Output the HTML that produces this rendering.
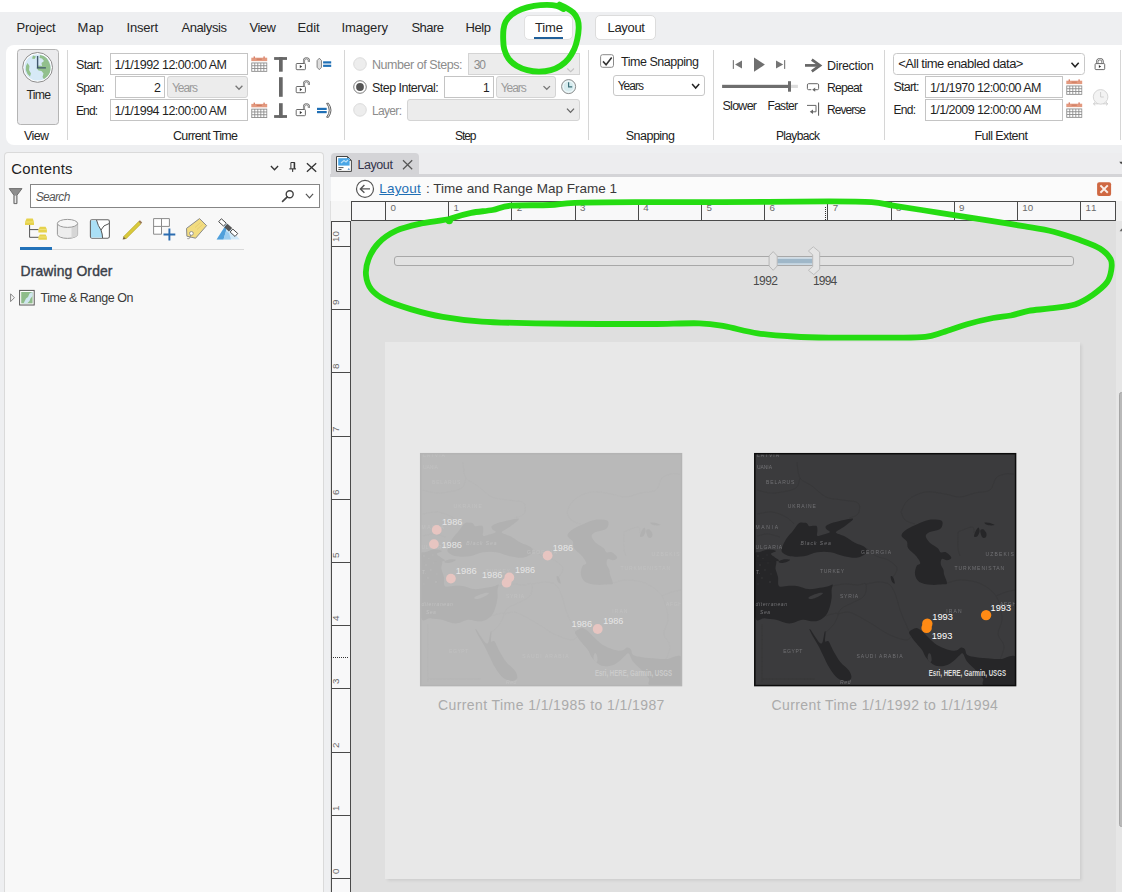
<!DOCTYPE html>
<html><head><meta charset="utf-8"><title>ArcGIS Pro - Time</title>
<style>
html,body{margin:0;padding:0;}
body{width:1122px;height:892px;overflow:hidden;position:relative;background:#eeeff1;font-family:"Liberation Sans",sans-serif;}
.t{position:absolute;white-space:pre;}
.b{position:absolute;box-sizing:border-box;}
svg{position:absolute;overflow:visible;}
</style></head><body>
<div class="b" style="left:0.0px;top:0.0px;width:1122.0px;height:12.0px;background:#ffffff;border-radius:0px;"></div>
<div class="b" style="left:0.0px;top:12.0px;width:1122.0px;height:33.0px;background:#eeeff1;border-radius:0px;"></div>
<div class="b" style="left:6.0px;top:45.0px;width:1116.0px;height:100.0px;background:#ffffff;border-radius:0px;border-radius:8px 0 0 8px;"></div>
<div class="b" style="left:0.0px;top:145.0px;width:1122.0px;height:8.0px;background:#eeeff1;border-radius:0px;"></div>
<div class="t" style="left:16.5px;top:18.0px;font-size:13px;line-height:19px;letter-spacing:-0.24px;color:#262626;">Project</div>
<div class="t" style="left:77.5px;top:18.0px;font-size:13px;line-height:19px;letter-spacing:0.36px;color:#262626;">Map</div>
<div class="t" style="left:126.5px;top:18.0px;font-size:13px;line-height:19px;letter-spacing:-0.20px;color:#262626;">Insert</div>
<div class="t" style="left:181.5px;top:18.0px;font-size:13px;line-height:19px;letter-spacing:-0.42px;color:#262626;">Analysis</div>
<div class="t" style="left:249.5px;top:18.0px;font-size:13px;line-height:19px;letter-spacing:-0.48px;color:#262626;">View</div>
<div class="t" style="left:297.5px;top:18.0px;font-size:13px;line-height:19px;letter-spacing:-0.13px;color:#262626;">Edit</div>
<div class="t" style="left:341.5px;top:18.0px;font-size:13px;line-height:19px;letter-spacing:-0.08px;color:#262626;">Imagery</div>
<div class="t" style="left:411.5px;top:18.0px;font-size:13px;line-height:19px;letter-spacing:-0.55px;color:#262626;">Share</div>
<div class="t" style="left:465.5px;top:18.0px;font-size:13px;line-height:19px;letter-spacing:-0.41px;color:#262626;">Help</div>
<div class="b" style="left:524.0px;top:15.0px;width:49.0px;height:25.0px;background:#ffffff;border:1px solid #e0e0e0;border-radius:5px;"></div>
<div class="t" style="left:535.0px;top:18.0px;font-size:13px;line-height:19px;letter-spacing:-0.14px;color:#262626;">Time</div>
<div class="b" style="left:534.0px;top:37.0px;width:29.0px;height:2.0px;background:#1f5f99;border-radius:0px;"></div>
<div class="b" style="left:595.0px;top:15.0px;width:61.0px;height:25.0px;background:#ffffff;border:1px solid #dcdcdc;border-radius:5px;"></div>
<div class="t" style="left:607.5px;top:18.0px;font-size:13px;line-height:19px;letter-spacing:-0.31px;color:#262626;">Layout</div>
<div class="b" style="left:17.0px;top:49.0px;width:42.0px;height:76.0px;background:#ebebed;border:1px solid #b4b4b4;border-radius:3.5px;"></div>
<div class="t" style="left:26.4px;top:85.7px;font-size:12.25px;line-height:18px;letter-spacing:-0.66px;color:#262626;">Time</div>
<div class="t" style="left:24.0px;top:127.0px;font-size:12.5px;line-height:18px;letter-spacing:-0.62px;color:#222;">View</div>
<div class="b" style="left:67.0px;top:50.0px;width:1.0px;height:90.0px;background:#d6d6d6;border-radius:0px;"></div>
<div class="b" style="left:344.0px;top:50.0px;width:1.0px;height:90.0px;background:#d6d6d6;border-radius:0px;"></div>
<div class="b" style="left:588.0px;top:50.0px;width:1.0px;height:90.0px;background:#d6d6d6;border-radius:0px;"></div>
<div class="b" style="left:713.0px;top:50.0px;width:1.0px;height:90.0px;background:#d6d6d6;border-radius:0px;"></div>
<div class="b" style="left:884.0px;top:50.0px;width:1.0px;height:90.0px;background:#d6d6d6;border-radius:0px;"></div>
<div class="b" style="left:1120.0px;top:50.0px;width:1.0px;height:90.0px;background:#d6d6d6;border-radius:0px;"></div>
<div class="t" style="left:76.0px;top:56.0px;font-size:12.5px;line-height:18px;letter-spacing:-0.67px;color:#1f1f1f;">Start:</div>
<div class="t" style="left:76.0px;top:79.0px;font-size:12.0px;line-height:18px;letter-spacing:-0.71px;color:#1f1f1f;">Span:</div>
<div class="t" style="left:76.0px;top:102.0px;font-size:12.0px;line-height:18px;letter-spacing:-0.89px;color:#1f1f1f;">End:</div>
<div class="b" style="left:110.0px;top:53.0px;width:138.0px;height:22.0px;background:#fff;border:1px solid #c4c4c4;border-radius:0px;"></div>
<div class="t" style="left:114.5px;top:56.0px;font-size:12.5px;line-height:18px;letter-spacing:-0.52px;color:#1f1f1f;">1/1/1992 12:00:00 AM</div>
<div class="b" style="left:115.0px;top:76.0px;width:50.0px;height:22.0px;background:#fff;border:1px solid #c4c4c4;border-radius:0px;"></div>
<div class="t" style="left:154.0px;top:79.0px;font-size:12.5px;line-height:18px;letter-spacing:-0.45px;color:#1f1f1f;">2</div>
<div class="b" style="left:167.0px;top:76.0px;width:81.0px;height:22.0px;background:#ececec;border:1px solid #d4d4d4;border-radius:3px;"></div>
<div class="t" style="left:172.0px;top:79.0px;font-size:12.0px;line-height:18px;letter-spacing:-1.06px;color:#9a9a9a;">Years</div>
<div class="b" style="left:110.0px;top:99.0px;width:138.0px;height:22.0px;background:#fff;border:1px solid #c4c4c4;border-radius:0px;"></div>
<div class="t" style="left:114.5px;top:102.0px;font-size:12.5px;line-height:18px;letter-spacing:-0.52px;color:#1f1f1f;">1/1/1994 12:00:00 AM</div>
<div class="t" style="left:173.0px;top:127.0px;font-size:12.5px;line-height:18px;letter-spacing:-0.66px;color:#222;">Current Time</div>
<div class="t" style="left:372.0px;top:55.7px;font-size:12.5px;line-height:18px;letter-spacing:-0.45px;color:#8c8c8c;">Number of Steps:</div>
<div class="b" style="left:468.0px;top:53.0px;width:112.0px;height:22.0px;background:#ececec;border:1px solid #d4d4d4;border-radius:0px;"></div>
<div class="t" style="left:473.7px;top:55.7px;font-size:12.0px;line-height:18px;letter-spacing:-1.05px;color:#8c8c8c;">30</div>
<div class="t" style="left:372.0px;top:78.7px;font-size:12.5px;line-height:18px;letter-spacing:-0.53px;color:#1f1f1f;">Step Interval:</div>
<div class="b" style="left:444.0px;top:76.0px;width:50.0px;height:22.0px;background:#fff;border:1px solid #c4c4c4;border-radius:0px;"></div>
<div class="t" style="left:483.0px;top:78.7px;font-size:12.0px;line-height:18px;letter-spacing:-0.67px;color:#1f1f1f;">1</div>
<div class="b" style="left:496.0px;top:76.0px;width:60.0px;height:22.0px;background:#ececec;border:1px solid #d4d4d4;border-radius:3px;"></div>
<div class="t" style="left:500.7px;top:78.7px;font-size:12.0px;line-height:18px;letter-spacing:-1.06px;color:#9a9a9a;">Years</div>
<div class="t" style="left:372.0px;top:102.0px;font-size:12.0px;line-height:18px;letter-spacing:-0.67px;color:#8c8c8c;">Layer:</div>
<div class="b" style="left:407.0px;top:99.0px;width:173.0px;height:22.0px;background:#ececec;border:1px solid #d4d4d4;border-radius:3px;"></div>
<div class="t" style="left:455.0px;top:127.0px;font-size:12.0px;line-height:18px;letter-spacing:-1.06px;color:#222;">Step</div>
<div class="t" style="left:621.0px;top:53.0px;font-size:12.5px;line-height:18px;letter-spacing:-0.47px;color:#1f1f1f;">Time Snapping</div>
<div class="b" style="left:613.0px;top:75.0px;width:92.0px;height:21.0px;background:#fff;border:1px solid #c8c8c8;border-radius:3px;"></div>
<div class="t" style="left:617.7px;top:77.0px;font-size:12.0px;line-height:18px;letter-spacing:-0.99px;color:#1f1f1f;">Years</div>
<div class="t" style="left:625.7px;top:127.0px;font-size:12.5px;line-height:18px;letter-spacing:-0.50px;color:#222;">Snapping</div>
<div class="t" style="left:827.0px;top:57.0px;font-size:12.5px;line-height:18px;letter-spacing:-0.33px;color:#1f1f1f;">Direction</div>
<div class="t" style="left:827.0px;top:78.7px;font-size:12.25px;line-height:18px;letter-spacing:-0.80px;color:#1f1f1f;">Repeat</div>
<div class="t" style="left:827.0px;top:101.0px;font-size:12.0px;line-height:18px;letter-spacing:-0.95px;color:#1f1f1f;">Reverse</div>
<div class="t" style="left:722.5px;top:97.0px;font-size:12.5px;line-height:18px;letter-spacing:-0.74px;color:#1f1f1f;">Slower</div>
<div class="t" style="left:767.5px;top:97.0px;font-size:12.0px;line-height:18px;letter-spacing:-0.70px;color:#1f1f1f;">Faster</div>
<div class="t" style="left:776.0px;top:127.0px;font-size:12.0px;line-height:18px;letter-spacing:-0.67px;color:#222;">Playback</div>
<div class="b" style="left:893.0px;top:53.0px;width:192.0px;height:22.0px;background:#fff;border:1px solid #c8c8c8;border-radius:3.5px;"></div>
<div class="t" style="left:898.3px;top:53.8px;font-size:13px;line-height:19px;letter-spacing:-0.52px;color:#1f1f1f;">&lt;All time enabled data&gt;</div>
<div class="t" style="left:893.4px;top:78.4px;font-size:12.5px;line-height:18px;letter-spacing:-0.75px;color:#1f1f1f;">Start:</div>
<div class="b" style="left:925.0px;top:76.0px;width:138.0px;height:22.0px;background:#fff;border:1px solid #c4c4c4;border-radius:0px;"></div>
<div class="t" style="left:930.0px;top:78.5px;font-size:12.5px;line-height:18px;letter-spacing:-0.58px;color:#1f1f1f;">1/1/1970 12:00:00 AM</div>
<div class="t" style="left:893.4px;top:101.3px;font-size:12.0px;line-height:18px;letter-spacing:-0.69px;color:#1f1f1f;">End:</div>
<div class="b" style="left:925.0px;top:99.0px;width:138.0px;height:22.0px;background:#fff;border:1px solid #c4c4c4;border-radius:0px;"></div>
<div class="t" style="left:930.0px;top:101.3px;font-size:12.5px;line-height:18px;letter-spacing:-0.58px;color:#1f1f1f;">1/1/2009 12:00:00 AM</div>
<div class="t" style="left:974.5px;top:126.6px;font-size:12.5px;line-height:18px;letter-spacing:-0.57px;color:#222;">Full Extent</div>
<div class="b" style="left:4.0px;top:152.0px;width:320.0px;height:741.0px;background:#f8f8f8;border:1px solid #dadada;border-radius:4px;border-bottom:none;border-radius:4px 4px 0 0;"></div>
<div class="t" style="left:11.3px;top:158.9px;font-size:14.9px;line-height:20px;letter-spacing:0.22px;color:#1f1f1f;">Contents</div>
<div class="b" style="left:30.0px;top:184.0px;width:290.0px;height:24.0px;background:#fff;border:1px solid #858585;border-radius:0px;"></div>
<div class="t" style="left:35.8px;top:187.9px;font-size:12.0px;line-height:18px;letter-spacing:-0.70px;color:#555;font-style:italic;">Search</div>
<div class="b" style="left:20.3px;top:247.3px;width:31.7px;height:2.9px;background:#2272b9;border-radius:0px;"></div>
<div class="b" style="left:52.0px;top:248.8px;width:192.0px;height:1.0px;background:#d9d9d9;border-radius:0px;"></div>
<div class="t" style="left:20.5px;top:261.3px;font-size:13.9px;line-height:20px;letter-spacing:0.14px;color:#3a4048;-webkit-text-stroke:0.4px #3a4048;">Drawing Order</div>
<div class="t" style="left:40.5px;top:288.6px;font-size:12.5px;line-height:18px;letter-spacing:-0.47px;color:#3a3a3a;">Time &amp; Range On</div>
<div class="b" style="left:330.0px;top:153.0px;width:792.0px;height:23.0px;background:#ededef;border-radius:0px;"></div>
<div class="b" style="left:330.5px;top:152.5px;width:88.5px;height:23.5px;background:#d4d4d7;border-radius:0px;border-radius:4px 4px 0 0;"></div>
<div class="t" style="left:357.4px;top:155.7px;font-size:12.5px;line-height:18px;letter-spacing:-0.41px;color:#33334a;">Layout</div>
<div class="b" style="left:330.0px;top:174.2px;width:792.0px;height:2.8px;background:#d4d4d7;border-radius:0px;"></div>
<div class="b" style="left:331.0px;top:177.0px;width:791.0px;height:24.3px;background:#fbfbfb;border-radius:0px;"></div>
<div class="t" style="left:379.3px;top:179.2px;font-size:13.5px;line-height:19px;letter-spacing:0.17px;color:#1f6fb5;text-decoration:underline;">Layout</div>
<div class="t" style="left:426.0px;top:179.2px;font-size:13.5px;line-height:19px;letter-spacing:0.02px;color:#3a3a3a;">: Time and Range Map Frame 1</div>
<div class="b" style="left:330.0px;top:201.0px;width:792.0px;height:691.0px;background:#dfdfdf;border-radius:0px;"></div>
<div class="b" style="left:331.0px;top:201.0px;width:20.0px;height:20.0px;background:#f6f6f6;border-radius:0px;"></div>
<div class="b" style="left:1116.0px;top:201.0px;width:6.0px;height:20.0px;background:#f0f0f0;border-radius:0px;"></div>
<div class="b" style="left:384.6px;top:341.6px;width:695.6px;height:537.3px;background:#e8e8e8;border-radius:0px;box-shadow:1.5px 1.5px 3px rgba(0,0,0,0.09), -0.5px -0.5px 1px rgba(255,255,255,0.5);"></div>
<div class="b" style="left:351.0px;top:201.0px;width:765.0px;height:20.0px;background:#f8f8f9;border:1px solid #4a4a4a;border-radius:0px;"></div>
<div class="b" style="left:385.0px;top:201.0px;width:1.0px;height:19.0px;background:#4a4a4a;border-radius:0px;"></div>
<div class="t" style="left:390.4px;top:199.8px;font-size:9.8px;line-height:15px;letter-spacing:0.00px;color:#6a6a6a;">0</div>
<div class="b" style="left:448.2px;top:201.0px;width:1.0px;height:19.0px;background:#4a4a4a;border-radius:0px;"></div>
<div class="t" style="left:453.6px;top:199.8px;font-size:9.8px;line-height:15px;letter-spacing:0.00px;color:#6a6a6a;">1</div>
<div class="b" style="left:511.4px;top:201.0px;width:1.0px;height:19.0px;background:#4a4a4a;border-radius:0px;"></div>
<div class="t" style="left:516.8px;top:199.8px;font-size:9.8px;line-height:15px;letter-spacing:0.00px;color:#6a6a6a;">2</div>
<div class="b" style="left:574.6px;top:201.0px;width:1.0px;height:19.0px;background:#4a4a4a;border-radius:0px;"></div>
<div class="t" style="left:580.0px;top:199.8px;font-size:9.8px;line-height:15px;letter-spacing:0.00px;color:#6a6a6a;">3</div>
<div class="b" style="left:637.8px;top:201.0px;width:1.0px;height:19.0px;background:#4a4a4a;border-radius:0px;"></div>
<div class="t" style="left:643.2px;top:199.8px;font-size:9.8px;line-height:15px;letter-spacing:0.00px;color:#6a6a6a;">4</div>
<div class="b" style="left:701.0px;top:201.0px;width:1.0px;height:19.0px;background:#4a4a4a;border-radius:0px;"></div>
<div class="t" style="left:706.4px;top:199.8px;font-size:9.8px;line-height:15px;letter-spacing:0.00px;color:#6a6a6a;">5</div>
<div class="b" style="left:764.1px;top:201.0px;width:1.0px;height:19.0px;background:#4a4a4a;border-radius:0px;"></div>
<div class="t" style="left:769.5px;top:199.8px;font-size:9.8px;line-height:15px;letter-spacing:0.00px;color:#6a6a6a;">6</div>
<div class="b" style="left:827.3px;top:201.0px;width:1.0px;height:19.0px;background:#4a4a4a;border-radius:0px;"></div>
<div class="t" style="left:832.7px;top:199.8px;font-size:9.8px;line-height:15px;letter-spacing:0.00px;color:#6a6a6a;">7</div>
<div class="b" style="left:890.5px;top:201.0px;width:1.0px;height:19.0px;background:#4a4a4a;border-radius:0px;"></div>
<div class="t" style="left:895.9px;top:199.8px;font-size:9.8px;line-height:15px;letter-spacing:0.00px;color:#6a6a6a;">8</div>
<div class="b" style="left:953.7px;top:201.0px;width:1.0px;height:19.0px;background:#4a4a4a;border-radius:0px;"></div>
<div class="t" style="left:959.1px;top:199.8px;font-size:9.8px;line-height:15px;letter-spacing:0.00px;color:#6a6a6a;">9</div>
<div class="b" style="left:1016.9px;top:201.0px;width:1.0px;height:19.0px;background:#4a4a4a;border-radius:0px;"></div>
<div class="t" style="left:1022.3px;top:199.8px;font-size:9.8px;line-height:15px;letter-spacing:0.00px;color:#6a6a6a;">10</div>
<div class="b" style="left:1080.1px;top:201.0px;width:1.0px;height:19.0px;background:#4a4a4a;border-radius:0px;"></div>
<div class="t" style="left:1085.5px;top:199.8px;font-size:9.8px;line-height:15px;letter-spacing:0.73px;color:#6a6a6a;">11</div>
<div class="b" style="left:824.5px;top:207px;width:0;height:13px;border-left:1px dotted #333;"></div>
<div class="b" style="left:331.0px;top:221.0px;width:20.0px;height:672.0px;background:#f8f8f9;border:1px solid #4a4a4a;border-radius:0px;border-bottom:none;"></div>
<div class="b" style="left:331.0px;top:877.9px;width:19.0px;height:1.0px;background:#4a4a4a;border-radius:0px;"></div>
<div class="t" style="left:329.8px;top:874.0px;font-size:9.8px;line-height:11px;color:#6a6a6a;transform-origin:0 0;transform:rotate(-90deg);">0</div>
<div class="b" style="left:331.0px;top:814.7px;width:19.0px;height:1.0px;background:#4a4a4a;border-radius:0px;"></div>
<div class="t" style="left:329.8px;top:810.8px;font-size:9.8px;line-height:11px;color:#6a6a6a;transform-origin:0 0;transform:rotate(-90deg);">1</div>
<div class="b" style="left:331.0px;top:751.5px;width:19.0px;height:1.0px;background:#4a4a4a;border-radius:0px;"></div>
<div class="t" style="left:329.8px;top:747.6px;font-size:9.8px;line-height:11px;color:#6a6a6a;transform-origin:0 0;transform:rotate(-90deg);">2</div>
<div class="b" style="left:331.0px;top:688.3px;width:19.0px;height:1.0px;background:#4a4a4a;border-radius:0px;"></div>
<div class="t" style="left:329.8px;top:684.4px;font-size:9.8px;line-height:11px;color:#6a6a6a;transform-origin:0 0;transform:rotate(-90deg);">3</div>
<div class="b" style="left:331.0px;top:625.1px;width:19.0px;height:1.0px;background:#4a4a4a;border-radius:0px;"></div>
<div class="t" style="left:329.8px;top:621.2px;font-size:9.8px;line-height:11px;color:#6a6a6a;transform-origin:0 0;transform:rotate(-90deg);">4</div>
<div class="b" style="left:331.0px;top:562.0px;width:19.0px;height:1.0px;background:#4a4a4a;border-radius:0px;"></div>
<div class="t" style="left:329.8px;top:558.1px;font-size:9.8px;line-height:11px;color:#6a6a6a;transform-origin:0 0;transform:rotate(-90deg);">5</div>
<div class="b" style="left:331.0px;top:498.8px;width:19.0px;height:1.0px;background:#4a4a4a;border-radius:0px;"></div>
<div class="t" style="left:329.8px;top:494.9px;font-size:9.8px;line-height:11px;color:#6a6a6a;transform-origin:0 0;transform:rotate(-90deg);">6</div>
<div class="b" style="left:331.0px;top:435.6px;width:19.0px;height:1.0px;background:#4a4a4a;border-radius:0px;"></div>
<div class="t" style="left:329.8px;top:431.7px;font-size:9.8px;line-height:11px;color:#6a6a6a;transform-origin:0 0;transform:rotate(-90deg);">7</div>
<div class="b" style="left:331.0px;top:372.4px;width:19.0px;height:1.0px;background:#4a4a4a;border-radius:0px;"></div>
<div class="t" style="left:329.8px;top:368.5px;font-size:9.8px;line-height:11px;color:#6a6a6a;transform-origin:0 0;transform:rotate(-90deg);">8</div>
<div class="b" style="left:331.0px;top:309.2px;width:19.0px;height:1.0px;background:#4a4a4a;border-radius:0px;"></div>
<div class="t" style="left:329.8px;top:305.3px;font-size:9.8px;line-height:11px;color:#6a6a6a;transform-origin:0 0;transform:rotate(-90deg);">9</div>
<div class="b" style="left:331.0px;top:246.0px;width:19.0px;height:1.0px;background:#4a4a4a;border-radius:0px;"></div>
<div class="t" style="left:329.8px;top:242.1px;font-size:9.8px;line-height:11px;color:#6a6a6a;transform-origin:0 0;transform:rotate(-90deg);">10</div>
<div class="b" style="left:331px;top:656.5px;width:17px;height:0;border-top:1px dotted #333;"></div>
<div class="b" style="left:1116.0px;top:221.0px;width:6.0px;height:671.0px;background:#e6e6e6;border-radius:0px;"></div>
<div class="b" style="left:1119.0px;top:392.0px;width:5.0px;height:435.0px;background:#b9b9b9;border:1px solid #a6a6a6;border-radius:0px;border-radius:2.5px 0 0 2.5px;"></div>
<div class="b" style="left:394.0px;top:256.0px;width:680.0px;height:10.0px;background:#e2e2e2;border:1px solid #a8a8a8;border-radius:3px;"></div>
<div class="t" style="left:753.0px;top:271.8px;font-size:12px;line-height:18px;letter-spacing:-0.56px;color:#4a4a4a;">1992</div>
<div class="t" style="left:813.0px;top:271.8px;font-size:12px;line-height:18px;letter-spacing:-0.80px;color:#4a4a4a;">1994</div>
<svg width="1122" height="892" style="left:0;top:0"><defs><clipPath id="cp0"><rect x="754.8" y="453.7" width="260.80000000000007" height="231.90000000000003"/></clipPath></defs><g transform="translate(0,0)"><rect x="754.5" y="453.4" width="261.4000000000001" height="232.50000000000003" fill="#3b3b3d"/><g clip-path="url(#cp0)" style="filter:blur(0.45px)"><path d="M797.0,462.0C797.5,464.7 797.5,474.0 800.0,478.0C802.5,482.0 807.7,482.8 812.0,486.0C816.3,489.2 821.0,494.7 826.0,497.0C831.0,499.3 836.7,499.0 842.0,500.0C847.3,501.0 855.3,500.7 858.0,503.0C860.7,505.3 859.5,511.5 858.0,514.0C856.5,516.5 850.5,517.3 849.0,518.0" fill="none" stroke="#363638" stroke-width="0.7"/><path d="M757.0,490.0C759.2,490.5 765.8,492.7 770.0,493.0C774.2,493.3 777.7,492.8 782.0,492.0C786.3,491.2 793.0,490.3 796.0,488.0C799.0,485.7 799.3,479.7 800.0,478.0" fill="none" stroke="#363638" stroke-width="0.7"/><path d="M757.0,514.0C759.5,513.7 767.2,511.5 772.0,512.0C776.8,512.5 782.3,515.0 786.0,517.0C789.7,519.0 792.7,522.8 794.0,524.0" fill="none" stroke="#363638" stroke-width="0.7"/><path d="M757.0,536.0C758.8,535.7 764.2,533.8 768.0,534.0C771.8,534.2 778.0,536.5 780.0,537.0" fill="none" stroke="#363638" stroke-width="0.7"/><path d="M901.0,512.0C902.2,510.0 904.0,503.3 908.0,500.0C912.0,496.7 918.8,493.0 925.0,492.0C931.2,491.0 939.2,493.2 945.0,494.0C950.8,494.8 955.0,497.2 960.0,497.0C965.0,496.8 970.0,494.2 975.0,493.0C980.0,491.8 986.5,492.5 990.0,490.0C993.5,487.5 993.5,480.7 996.0,478.0C998.5,475.3 1002.0,474.7 1005.0,474.0C1008.0,473.3 1012.5,474.0 1014.0,474.0" fill="none" stroke="#363638" stroke-width="0.7"/><path d="M901.0,512.0C901.7,513.3 902.7,518.0 905.0,520.0C907.3,522.0 913.3,523.3 915.0,524.0" fill="none" stroke="#363638" stroke-width="0.7"/><path d="M958.0,532.0C958.0,534.7 957.7,544.0 958.0,548.0C958.3,552.0 959.7,554.7 960.0,556.0" fill="none" stroke="#363638" stroke-width="0.7"/><path d="M958.0,532.0C960.3,531.2 969.3,526.8 972.0,527.0C974.7,527.2 973.7,532.0 974.0,533.0" fill="none" stroke="#363638" stroke-width="0.7"/><path d="M866.0,548.0C867.7,549.3 872.3,554.0 876.0,556.0C879.7,558.0 884.5,558.0 888.0,560.0C891.5,562.0 896.2,565.2 897.0,568.0C897.8,570.8 893.7,575.5 893.0,577.0" fill="none" stroke="#363638" stroke-width="0.7"/><path d="M832.0,586.0C834.2,585.7 840.7,584.2 845.0,584.0C849.3,583.8 854.5,585.0 858.0,585.0C861.5,585.0 865.0,582.2 866.0,584.0C867.0,585.8 866.3,592.8 864.0,596.0C861.7,599.2 855.7,601.0 852.0,603.0C848.3,605.0 844.3,606.2 842.0,608.0C839.7,609.8 838.7,613.0 838.0,614.0" fill="none" stroke="#363638" stroke-width="0.7"/><path d="M866.0,584.0C868.3,583.7 876.0,581.8 880.0,582.0C884.0,582.2 887.3,582.7 890.0,585.0C892.7,587.3 894.3,591.8 896.0,596.0C897.7,600.2 898.5,605.7 900.0,610.0C901.5,614.3 903.5,618.5 905.0,622.0C906.5,625.5 908.3,629.5 909.0,631.0" fill="none" stroke="#363638" stroke-width="0.7"/><path d="M838.0,614.0C839.7,613.7 844.7,611.7 848.0,612.0C851.3,612.3 854.0,614.0 858.0,616.0C862.0,618.0 867.0,621.0 872.0,624.0C877.0,627.0 882.5,631.3 888.0,634.0C893.5,636.7 901.2,639.5 905.0,640.0C908.8,640.5 910.0,637.5 911.0,637.0" fill="none" stroke="#363638" stroke-width="0.7"/><path d="M826.0,616.0C827.0,615.7 830.0,614.3 832.0,614.0C834.0,613.7 837.7,612.3 838.0,614.0C838.3,615.7 836.0,621.0 834.0,624.0C832.0,627.0 827.3,630.7 826.0,632.0" fill="none" stroke="#363638" stroke-width="0.7"/><path d="M947.0,583.0C949.2,582.5 955.2,580.2 960.0,580.0C964.8,579.8 971.3,580.7 976.0,582.0C980.7,583.3 984.7,585.7 988.0,588.0C991.3,590.3 994.0,593.0 996.0,596.0C998.0,599.0 999.0,602.0 1000.0,606.0C1001.0,610.0 1002.3,615.3 1002.0,620.0C1001.7,624.7 997.7,629.7 998.0,634.0C998.3,638.3 1003.7,641.7 1004.0,646.0C1004.3,650.3 1000.7,657.7 1000.0,660.0" fill="none" stroke="#363638" stroke-width="0.7"/><path d="M996.0,596.0C997.7,595.3 1002.8,593.0 1006.0,592.0C1009.2,591.0 1013.5,590.3 1015.0,590.0" fill="none" stroke="#363638" stroke-width="0.7"/><path d="M762.0,624.0C762.0,633.7 762.0,672.3 762.0,682.0" fill="none" stroke="#363638" stroke-width="0.7"/><path d="M762.0,679.0C770.8,679.0 806.2,679.0 815.0,679.0" fill="none" stroke="#363638" stroke-width="0.7"/><path d="M781.6,549.5C782.0,547.0 784.4,541.9 786.3,538.8C788.2,535.7 791.0,533.3 793.0,530.7C795.0,528.1 796.9,524.7 798.6,523.4C800.3,522.1 801.6,522.8 803.0,522.8C804.4,522.8 805.8,522.6 806.8,523.2C807.8,523.8 808.2,525.8 809.2,526.2C810.2,526.6 811.7,525.8 813.0,525.8C814.3,525.8 816.1,525.3 816.8,526.2C817.5,527.1 817.3,529.4 817.4,531.0C817.5,532.6 816.3,535.2 817.2,535.8C818.1,536.4 820.5,535.3 822.6,534.7C824.7,534.1 829.1,533.1 829.8,532.2C830.4,531.3 827.1,530.3 826.5,529.3C825.9,528.3 824.9,527.1 826.0,526.0C827.1,524.9 830.4,523.6 833.4,522.6C836.4,521.6 840.9,520.5 844.1,519.9C847.4,519.2 852.0,518.2 852.9,518.7C853.8,519.2 851.0,521.3 849.5,522.6C848.0,523.9 846.1,525.4 844.1,526.7C842.1,528.1 838.7,529.7 837.4,530.7C836.1,531.7 835.2,532.0 836.3,532.9C837.4,533.8 841.0,534.5 844.1,536.1C847.2,537.8 851.5,541.0 854.9,542.8C858.3,544.6 862.3,545.2 864.3,546.8C866.3,548.4 868.1,550.4 867.0,552.2C865.9,554.0 861.4,556.9 857.6,557.6C853.8,558.3 848.6,557.1 844.1,556.2C839.6,555.3 835.2,552.9 830.7,552.2C826.2,551.5 821.7,551.5 817.2,552.2C812.7,552.9 808.3,555.5 803.8,556.2C799.3,556.9 793.7,556.7 790.3,556.2C786.9,555.8 785.0,554.6 783.6,553.5C782.2,552.4 781.2,552.0 781.6,549.5Z" fill="#262628"/><path d="M901.5,535.4C901.5,533.4 904.2,531.2 906.9,529.3C909.6,527.4 914.1,525.6 917.7,524.0C921.3,522.4 924.5,520.5 928.4,519.9C932.3,519.3 939.0,519.5 941.2,520.6C943.5,521.7 942.5,525.1 941.9,526.7C941.3,528.3 939.8,529.1 937.8,530.0C935.8,530.9 931.8,531.0 929.8,532.0C927.8,533.0 925.7,534.3 925.7,536.1C925.7,537.9 927.8,540.8 929.8,542.8C931.8,544.8 936.0,546.6 937.8,548.2C939.6,549.8 939.1,551.5 940.5,552.2C941.9,552.9 944.1,551.3 945.9,552.2C947.7,553.1 951.1,556.2 951.3,557.6C951.5,559.0 948.8,560.1 947.2,560.3C945.6,560.5 943.0,558.2 941.9,558.9C940.8,559.6 940.5,562.4 940.8,564.3C941.1,566.1 943.0,568.3 943.5,570.0C944.0,571.7 943.5,572.4 944.1,574.6C944.7,576.8 947.2,581.7 947.0,583.3C946.8,584.9 945.3,584.0 942.6,584.3C939.9,584.5 934.9,585.2 931.0,584.8C927.1,584.4 922.0,583.6 919.3,581.9C916.6,580.2 915.5,577.2 915.0,574.6C914.5,572.0 915.7,567.9 916.6,566.0C917.5,564.1 920.3,564.6 920.3,563.0C920.2,561.4 918.3,558.7 916.3,556.2C914.3,553.7 909.8,550.7 908.2,548.2C906.6,545.7 908.0,543.5 906.9,541.4C905.8,539.3 901.5,537.4 901.5,535.4Z" fill="#262628"/><path d="M974.1,536.4C973.8,535.6 974.8,533.0 975.5,531.5C976.2,530.0 977.7,527.6 978.4,527.6C979.1,527.6 979.8,530.1 979.6,531.5C979.4,532.9 978.3,535.4 977.4,536.2C976.5,537.0 974.4,537.2 974.1,536.4Z" fill="#262628"/><path d="M980.4,530.2C980.8,529.4 982.6,528.9 983.6,529.4C984.6,529.9 986.0,532.0 986.4,533.3C986.8,534.6 986.4,536.5 985.8,537.2C985.2,537.9 983.4,538.1 982.6,537.6C981.8,537.1 981.4,535.7 981.0,534.5C980.6,533.3 980.0,531.1 980.4,530.2Z" fill="#262628"/><path d="M984.6,522.6C985.3,522.4 988.4,522.6 990.0,523.0C991.6,523.4 994.3,524.4 994.5,524.8C994.7,525.2 992.4,525.5 991.0,525.4C989.6,525.3 987.1,524.9 986.0,524.4C984.9,523.9 983.9,522.8 984.6,522.6Z" fill="#262628"/><path d="M890.9,576.0C891.3,575.8 892.6,576.3 893.2,577.5C893.9,578.7 894.9,582.4 894.8,583.3C894.7,584.1 893.2,583.3 892.6,582.6C892.0,581.9 891.3,580.1 891.0,579.0C890.7,577.9 890.5,576.2 890.9,576.0Z" fill="#262628"/><path d="M754.8,560.0C758.1,550.8 771.3,558.5 774.8,560.0C778.2,561.5 775.0,565.9 775.5,568.7C776.0,571.5 777.4,574.1 778.0,577.0C778.6,579.9 777.3,584.7 779.1,586.2C780.9,587.7 785.8,585.8 789.0,585.8C792.2,585.8 794.9,585.7 798.1,586.2C801.3,586.8 804.7,588.9 808.3,589.1C811.9,589.4 816.4,588.2 819.9,587.7C823.4,587.2 826.9,586.4 829.0,585.9C831.1,585.4 832.2,583.9 832.6,584.6C833.0,585.3 831.8,587.8 831.6,590.0C831.4,592.2 832.0,594.9 831.6,597.9C831.2,600.9 830.4,605.2 829.4,608.1C828.4,611.0 827.6,613.3 825.8,615.4C824.0,617.5 820.9,619.5 818.5,620.5C816.1,621.5 813.9,621.3 811.2,621.2C808.5,621.1 806.0,619.3 802.4,619.7C798.8,620.1 793.7,623.4 789.3,623.4C784.9,623.4 780.3,620.6 776.2,619.7C772.1,618.9 768.2,619.0 764.6,618.3C761.0,617.6 756.4,625.1 754.8,615.4C753.2,605.7 751.5,569.2 754.8,560.0Z" fill="#262628"/><path d="M754.8,553.0C755.7,551.5 757.8,552.6 760.0,552.0C762.2,551.4 765.3,549.7 768.0,549.5C770.7,549.3 775.5,550.2 776.0,551.0C776.5,551.8 771.2,552.9 771.0,554.0C770.8,555.1 773.8,556.3 775.0,557.5C776.2,558.7 781.4,560.4 778.0,561.0C774.6,561.6 758.7,562.3 754.8,561.0C750.9,559.7 753.9,554.5 754.8,553.0Z" fill="#262628"/><path d="M778.5,561.5C779.0,560.9 782.1,559.6 784.0,559.3C785.9,559.0 789.7,559.3 790.0,559.8C790.3,560.3 787.5,561.8 786.0,562.3C784.5,562.8 782.2,563.1 781.0,563.0C779.8,562.9 778.0,562.1 778.5,561.5Z" fill="#262628"/><path d="M809.5,629.7C809.1,628.5 810.1,629.1 811.0,630.2C811.9,631.3 813.5,634.4 815.0,636.5C816.5,638.6 818.6,642.1 819.9,643.0C821.2,643.9 821.8,643.7 822.6,641.9C823.4,640.1 824.1,633.7 824.6,632.1C825.1,630.5 825.5,630.9 825.6,632.4C825.7,633.9 824.7,639.7 825.2,641.2C825.7,642.7 827.4,640.1 828.7,641.6C830.0,643.1 831.1,646.9 833.0,650.3C834.9,653.7 837.6,658.6 840.3,662.0C843.0,665.4 847.3,668.0 849.1,670.7C850.9,673.4 851.8,676.3 851.3,678.0C850.8,679.7 848.5,680.9 846.2,680.9C843.9,680.9 840.2,680.2 837.4,678.0C834.6,675.8 831.8,671.7 829.4,667.8C827.0,663.9 824.6,658.3 822.8,654.7C821.0,651.1 820.0,648.9 818.5,646.0C817.0,643.1 815.0,640.2 813.5,637.5C812.0,634.8 809.9,630.9 809.5,629.7Z" fill="#262628"/><path d="M909.0,632.6C909.0,631.2 911.2,630.4 912.5,629.6C913.8,628.9 915.1,627.8 916.8,628.1C918.4,628.4 920.3,629.8 922.4,631.5C924.5,633.2 926.8,636.0 929.2,638.2C931.6,640.5 934.0,643.1 937.0,645.0C940.0,646.9 943.9,648.5 947.1,649.4C950.3,650.3 953.8,650.9 956.1,650.6C958.4,650.3 959.6,647.8 961.1,647.6C962.6,647.4 964.0,648.2 965.0,649.4C966.0,650.6 965.4,653.7 967.3,655.0C969.2,656.3 972.6,656.7 976.3,657.3C980.0,657.9 985.6,658.1 989.7,658.4C993.8,658.7 996.6,659.2 1000.9,659.0C1005.2,658.8 1013.1,652.9 1015.6,657.3C1018.1,661.7 1020.7,680.9 1015.6,685.6C1010.5,690.3 990.6,686.8 985.2,685.6C979.8,684.4 984.5,681.1 983.0,678.6C981.5,676.1 978.9,673.5 976.3,670.7C973.7,667.9 969.5,664.7 967.3,661.8C965.0,658.9 964.1,654.6 962.8,653.5C961.5,652.4 960.9,654.2 959.4,655.4C957.9,656.6 955.8,659.1 953.8,660.7C951.8,662.3 949.5,664.2 947.1,665.1C944.7,666.0 941.7,666.5 939.3,666.3C936.9,666.1 934.8,665.5 932.5,664.0C930.2,662.5 927.5,659.5 925.8,657.3C924.1,655.1 923.9,652.9 922.4,650.6C920.9,648.4 918.5,645.9 916.8,643.8C915.1,641.7 913.6,640.1 912.3,638.2C911.0,636.3 909.0,634.0 909.0,632.6Z" fill="#262628"/><path d="M808.5,597.6C809.0,596.9 811.0,595.8 813.0,595.0C815.0,594.2 818.8,593.1 820.5,592.8C822.2,592.5 823.2,592.6 823.0,593.2C822.8,593.8 820.6,595.3 819.0,596.2C817.4,597.1 815.0,598.1 813.5,598.6C812.0,599.1 810.6,599.2 809.8,599.0C809.0,598.8 808.0,598.3 808.5,597.6Z" fill="#3b3b3d"/><path d="M928.6,653.6C929.1,653.0 930.3,653.5 930.8,654.6C931.3,655.8 931.8,659.3 931.6,660.5C931.4,661.7 930.1,662.4 929.4,662.0C928.7,661.6 927.7,659.4 927.6,658.0C927.5,656.6 928.1,654.2 928.6,653.6Z" fill="#3b3b3d"/><circle cx="758" cy="556" r="0.96" fill="#3b3b3d" opacity="0.55"/><circle cx="763" cy="558.5" r="0.80" fill="#3b3b3d" opacity="0.55"/><circle cx="767" cy="555" r="0.72" fill="#3b3b3d" opacity="0.55"/><circle cx="760" cy="565" r="1.12" fill="#3b3b3d" opacity="0.55"/><circle cx="765" cy="570" r="0.88" fill="#3b3b3d" opacity="0.55"/><circle cx="771" cy="574" r="0.80" fill="#3b3b3d" opacity="0.55"/><circle cx="757" cy="573" r="0.80" fill="#3b3b3d" opacity="0.55"/><circle cx="768" cy="563" r="0.64" fill="#3b3b3d" opacity="0.55"/><circle cx="762" cy="578" r="0.96" fill="#3b3b3d" opacity="0.55"/><circle cx="770" cy="582" r="1.20" fill="#3b3b3d" opacity="0.55"/><circle cx="758" cy="584" r="0.72" fill="#3b3b3d" opacity="0.55"/></g><g clip-path="url(#cp0)" font-family="Liberation Sans, sans-serif" fill="#727275" style="filter:blur(0.3px)"><text x="757" y="457.09999999999997" font-size="5.0" textLength="22.0" lengthAdjust="spacing">LATVIA</text><text x="757" y="468.9" font-size="5.0" textLength="15.0" lengthAdjust="spacing">UANIA</text><text x="766.1" y="483.5" font-size="5.0" textLength="28.3" lengthAdjust="spacing">BELARUS</text><text x="787.7" y="507.7" font-size="5.0" textLength="28.2" lengthAdjust="spacing">UKRAINE</text><text x="755.5" y="529.1999999999999" font-size="5.0" textLength="22.5" lengthAdjust="spacing">MANIA</text><text x="755.5" y="548.6999999999999" font-size="5.0" textLength="26.5" lengthAdjust="spacing">ULGARIA</text><text x="800.4" y="545.1" font-size="5.0" textLength="30.3" lengthAdjust="spacing" font-style="italic">Black Sea</text><text x="861" y="554.1" font-size="5.0" textLength="30.0" lengthAdjust="spacing">GEORGIA</text><text x="985.6" y="555.5" font-size="5.0" textLength="32.4" lengthAdjust="spacing">UZBEKIST</text><text x="954.5" y="569.9" font-size="5.0" textLength="49.7" lengthAdjust="spacing">TURKMENISTAN</text><text x="819.9" y="572.8" font-size="5.0" textLength="24.1" lengthAdjust="spacing">TURKEY</text><text x="840" y="598.0" font-size="5.0" textLength="18.1" lengthAdjust="spacing">SYRIA</text><text x="783.2" y="652.5" font-size="5.0" textLength="19.2" lengthAdjust="spacing">EGYPT</text><text x="856.4" y="657.8" font-size="5.0" textLength="46.2" lengthAdjust="spacing">SAUDI ARABIA</text><text x="755.5" y="605.9" font-size="5.0" textLength="31.5" lengthAdjust="spacing" font-style="italic">diterranean</text><text x="760" y="613.6" font-size="5.0" textLength="10.0" lengthAdjust="spacing" font-style="italic">Sea</text><text x="840" y="683.9" font-size="5.0" textLength="10.5" lengthAdjust="spacing" font-style="italic">Red</text><text x="946.3" y="612.9" font-size="5.0" textLength="15.3" lengthAdjust="spacing">IRAN</text><text x="1000" y="605.6" font-size="5.0" textLength="16.0" lengthAdjust="spacing">AFGH</text><text x="756" y="573.9" font-size="5.0" textLength="4.0" lengthAdjust="spacing">T.</text></g><circle cx="927.3" cy="623.7" r="5.2" fill="#ff8a14"/><circle cx="926.6" cy="627.9" r="5.2" fill="#ff8a14"/><circle cx="986.1" cy="615.1" r="5.2" fill="#ff8a14"/><text x="932.3" y="619.7" font-size="9.1" textLength="20.6" lengthAdjust="spacingAndGlyphs" fill="#fff" font-family="Liberation Sans, sans-serif">1993</text><text x="931.7" y="638.8" font-size="9.1" textLength="20.7" lengthAdjust="spacingAndGlyphs" fill="#fff" font-family="Liberation Sans, sans-serif">1993</text><text x="990.6" y="610.7" font-size="9.1" textLength="20.4" lengthAdjust="spacingAndGlyphs" fill="#fff" font-family="Liberation Sans, sans-serif">1993</text><text x="928.8" y="675.8" font-size="8.2" textLength="77.2" lengthAdjust="spacingAndGlyphs" fill="#dcdcdc" font-weight="bold" font-family="Liberation Sans, sans-serif">Esri, HERE, Garmin, USGS</text><rect x="754.8" y="453.7" width="260.80000000000007" height="231.90000000000003" fill="none" stroke="#0c0c0c" stroke-width="1.5"/></g></svg>
<svg width="1122" height="892" style="left:0;top:0"><defs><clipPath id="cp334"><rect x="754.8" y="453.7" width="260.80000000000007" height="231.90000000000003"/></clipPath></defs><g transform="translate(-334.1,0)"><rect x="754.5" y="453.4" width="261.4000000000001" height="232.50000000000003" fill="#b9b9b9"/><g clip-path="url(#cp334)" style="filter:blur(0.45px)"><path d="M797.0,462.0C797.5,464.7 797.5,474.0 800.0,478.0C802.5,482.0 807.7,482.8 812.0,486.0C816.3,489.2 821.0,494.7 826.0,497.0C831.0,499.3 836.7,499.0 842.0,500.0C847.3,501.0 855.3,500.7 858.0,503.0C860.7,505.3 859.5,511.5 858.0,514.0C856.5,516.5 850.5,517.3 849.0,518.0" fill="none" stroke="#b6b6b6" stroke-width="0.7"/><path d="M757.0,490.0C759.2,490.5 765.8,492.7 770.0,493.0C774.2,493.3 777.7,492.8 782.0,492.0C786.3,491.2 793.0,490.3 796.0,488.0C799.0,485.7 799.3,479.7 800.0,478.0" fill="none" stroke="#b6b6b6" stroke-width="0.7"/><path d="M757.0,514.0C759.5,513.7 767.2,511.5 772.0,512.0C776.8,512.5 782.3,515.0 786.0,517.0C789.7,519.0 792.7,522.8 794.0,524.0" fill="none" stroke="#b6b6b6" stroke-width="0.7"/><path d="M757.0,536.0C758.8,535.7 764.2,533.8 768.0,534.0C771.8,534.2 778.0,536.5 780.0,537.0" fill="none" stroke="#b6b6b6" stroke-width="0.7"/><path d="M901.0,512.0C902.2,510.0 904.0,503.3 908.0,500.0C912.0,496.7 918.8,493.0 925.0,492.0C931.2,491.0 939.2,493.2 945.0,494.0C950.8,494.8 955.0,497.2 960.0,497.0C965.0,496.8 970.0,494.2 975.0,493.0C980.0,491.8 986.5,492.5 990.0,490.0C993.5,487.5 993.5,480.7 996.0,478.0C998.5,475.3 1002.0,474.7 1005.0,474.0C1008.0,473.3 1012.5,474.0 1014.0,474.0" fill="none" stroke="#b6b6b6" stroke-width="0.7"/><path d="M901.0,512.0C901.7,513.3 902.7,518.0 905.0,520.0C907.3,522.0 913.3,523.3 915.0,524.0" fill="none" stroke="#b6b6b6" stroke-width="0.7"/><path d="M958.0,532.0C958.0,534.7 957.7,544.0 958.0,548.0C958.3,552.0 959.7,554.7 960.0,556.0" fill="none" stroke="#b6b6b6" stroke-width="0.7"/><path d="M958.0,532.0C960.3,531.2 969.3,526.8 972.0,527.0C974.7,527.2 973.7,532.0 974.0,533.0" fill="none" stroke="#b6b6b6" stroke-width="0.7"/><path d="M866.0,548.0C867.7,549.3 872.3,554.0 876.0,556.0C879.7,558.0 884.5,558.0 888.0,560.0C891.5,562.0 896.2,565.2 897.0,568.0C897.8,570.8 893.7,575.5 893.0,577.0" fill="none" stroke="#b6b6b6" stroke-width="0.7"/><path d="M832.0,586.0C834.2,585.7 840.7,584.2 845.0,584.0C849.3,583.8 854.5,585.0 858.0,585.0C861.5,585.0 865.0,582.2 866.0,584.0C867.0,585.8 866.3,592.8 864.0,596.0C861.7,599.2 855.7,601.0 852.0,603.0C848.3,605.0 844.3,606.2 842.0,608.0C839.7,609.8 838.7,613.0 838.0,614.0" fill="none" stroke="#b6b6b6" stroke-width="0.7"/><path d="M866.0,584.0C868.3,583.7 876.0,581.8 880.0,582.0C884.0,582.2 887.3,582.7 890.0,585.0C892.7,587.3 894.3,591.8 896.0,596.0C897.7,600.2 898.5,605.7 900.0,610.0C901.5,614.3 903.5,618.5 905.0,622.0C906.5,625.5 908.3,629.5 909.0,631.0" fill="none" stroke="#b6b6b6" stroke-width="0.7"/><path d="M838.0,614.0C839.7,613.7 844.7,611.7 848.0,612.0C851.3,612.3 854.0,614.0 858.0,616.0C862.0,618.0 867.0,621.0 872.0,624.0C877.0,627.0 882.5,631.3 888.0,634.0C893.5,636.7 901.2,639.5 905.0,640.0C908.8,640.5 910.0,637.5 911.0,637.0" fill="none" stroke="#b6b6b6" stroke-width="0.7"/><path d="M826.0,616.0C827.0,615.7 830.0,614.3 832.0,614.0C834.0,613.7 837.7,612.3 838.0,614.0C838.3,615.7 836.0,621.0 834.0,624.0C832.0,627.0 827.3,630.7 826.0,632.0" fill="none" stroke="#b6b6b6" stroke-width="0.7"/><path d="M947.0,583.0C949.2,582.5 955.2,580.2 960.0,580.0C964.8,579.8 971.3,580.7 976.0,582.0C980.7,583.3 984.7,585.7 988.0,588.0C991.3,590.3 994.0,593.0 996.0,596.0C998.0,599.0 999.0,602.0 1000.0,606.0C1001.0,610.0 1002.3,615.3 1002.0,620.0C1001.7,624.7 997.7,629.7 998.0,634.0C998.3,638.3 1003.7,641.7 1004.0,646.0C1004.3,650.3 1000.7,657.7 1000.0,660.0" fill="none" stroke="#b6b6b6" stroke-width="0.7"/><path d="M996.0,596.0C997.7,595.3 1002.8,593.0 1006.0,592.0C1009.2,591.0 1013.5,590.3 1015.0,590.0" fill="none" stroke="#b6b6b6" stroke-width="0.7"/><path d="M762.0,624.0C762.0,633.7 762.0,672.3 762.0,682.0" fill="none" stroke="#b6b6b6" stroke-width="0.7"/><path d="M762.0,679.0C770.8,679.0 806.2,679.0 815.0,679.0" fill="none" stroke="#b6b6b6" stroke-width="0.7"/><path d="M781.6,549.5C782.0,547.0 784.4,541.9 786.3,538.8C788.2,535.7 791.0,533.3 793.0,530.7C795.0,528.1 796.9,524.7 798.6,523.4C800.3,522.1 801.6,522.8 803.0,522.8C804.4,522.8 805.8,522.6 806.8,523.2C807.8,523.8 808.2,525.8 809.2,526.2C810.2,526.6 811.7,525.8 813.0,525.8C814.3,525.8 816.1,525.3 816.8,526.2C817.5,527.1 817.3,529.4 817.4,531.0C817.5,532.6 816.3,535.2 817.2,535.8C818.1,536.4 820.5,535.3 822.6,534.7C824.7,534.1 829.1,533.1 829.8,532.2C830.4,531.3 827.1,530.3 826.5,529.3C825.9,528.3 824.9,527.1 826.0,526.0C827.1,524.9 830.4,523.6 833.4,522.6C836.4,521.6 840.9,520.5 844.1,519.9C847.4,519.2 852.0,518.2 852.9,518.7C853.8,519.2 851.0,521.3 849.5,522.6C848.0,523.9 846.1,525.4 844.1,526.7C842.1,528.1 838.7,529.7 837.4,530.7C836.1,531.7 835.2,532.0 836.3,532.9C837.4,533.8 841.0,534.5 844.1,536.1C847.2,537.8 851.5,541.0 854.9,542.8C858.3,544.6 862.3,545.2 864.3,546.8C866.3,548.4 868.1,550.4 867.0,552.2C865.9,554.0 861.4,556.9 857.6,557.6C853.8,558.3 848.6,557.1 844.1,556.2C839.6,555.3 835.2,552.9 830.7,552.2C826.2,551.5 821.7,551.5 817.2,552.2C812.7,552.9 808.3,555.5 803.8,556.2C799.3,556.9 793.7,556.7 790.3,556.2C786.9,555.8 785.0,554.6 783.6,553.5C782.2,552.4 781.2,552.0 781.6,549.5Z" fill="#b1b1b1"/><path d="M901.5,535.4C901.5,533.4 904.2,531.2 906.9,529.3C909.6,527.4 914.1,525.6 917.7,524.0C921.3,522.4 924.5,520.5 928.4,519.9C932.3,519.3 939.0,519.5 941.2,520.6C943.5,521.7 942.5,525.1 941.9,526.7C941.3,528.3 939.8,529.1 937.8,530.0C935.8,530.9 931.8,531.0 929.8,532.0C927.8,533.0 925.7,534.3 925.7,536.1C925.7,537.9 927.8,540.8 929.8,542.8C931.8,544.8 936.0,546.6 937.8,548.2C939.6,549.8 939.1,551.5 940.5,552.2C941.9,552.9 944.1,551.3 945.9,552.2C947.7,553.1 951.1,556.2 951.3,557.6C951.5,559.0 948.8,560.1 947.2,560.3C945.6,560.5 943.0,558.2 941.9,558.9C940.8,559.6 940.5,562.4 940.8,564.3C941.1,566.1 943.0,568.3 943.5,570.0C944.0,571.7 943.5,572.4 944.1,574.6C944.7,576.8 947.2,581.7 947.0,583.3C946.8,584.9 945.3,584.0 942.6,584.3C939.9,584.5 934.9,585.2 931.0,584.8C927.1,584.4 922.0,583.6 919.3,581.9C916.6,580.2 915.5,577.2 915.0,574.6C914.5,572.0 915.7,567.9 916.6,566.0C917.5,564.1 920.3,564.6 920.3,563.0C920.2,561.4 918.3,558.7 916.3,556.2C914.3,553.7 909.8,550.7 908.2,548.2C906.6,545.7 908.0,543.5 906.9,541.4C905.8,539.3 901.5,537.4 901.5,535.4Z" fill="#b1b1b1"/><path d="M974.1,536.4C973.8,535.6 974.8,533.0 975.5,531.5C976.2,530.0 977.7,527.6 978.4,527.6C979.1,527.6 979.8,530.1 979.6,531.5C979.4,532.9 978.3,535.4 977.4,536.2C976.5,537.0 974.4,537.2 974.1,536.4Z" fill="#b1b1b1"/><path d="M980.4,530.2C980.8,529.4 982.6,528.9 983.6,529.4C984.6,529.9 986.0,532.0 986.4,533.3C986.8,534.6 986.4,536.5 985.8,537.2C985.2,537.9 983.4,538.1 982.6,537.6C981.8,537.1 981.4,535.7 981.0,534.5C980.6,533.3 980.0,531.1 980.4,530.2Z" fill="#b1b1b1"/><path d="M984.6,522.6C985.3,522.4 988.4,522.6 990.0,523.0C991.6,523.4 994.3,524.4 994.5,524.8C994.7,525.2 992.4,525.5 991.0,525.4C989.6,525.3 987.1,524.9 986.0,524.4C984.9,523.9 983.9,522.8 984.6,522.6Z" fill="#b1b1b1"/><path d="M890.9,576.0C891.3,575.8 892.6,576.3 893.2,577.5C893.9,578.7 894.9,582.4 894.8,583.3C894.7,584.1 893.2,583.3 892.6,582.6C892.0,581.9 891.3,580.1 891.0,579.0C890.7,577.9 890.5,576.2 890.9,576.0Z" fill="#b1b1b1"/><path d="M754.8,560.0C758.1,550.8 771.3,558.5 774.8,560.0C778.2,561.5 775.0,565.9 775.5,568.7C776.0,571.5 777.4,574.1 778.0,577.0C778.6,579.9 777.3,584.7 779.1,586.2C780.9,587.7 785.8,585.8 789.0,585.8C792.2,585.8 794.9,585.7 798.1,586.2C801.3,586.8 804.7,588.9 808.3,589.1C811.9,589.4 816.4,588.2 819.9,587.7C823.4,587.2 826.9,586.4 829.0,585.9C831.1,585.4 832.2,583.9 832.6,584.6C833.0,585.3 831.8,587.8 831.6,590.0C831.4,592.2 832.0,594.9 831.6,597.9C831.2,600.9 830.4,605.2 829.4,608.1C828.4,611.0 827.6,613.3 825.8,615.4C824.0,617.5 820.9,619.5 818.5,620.5C816.1,621.5 813.9,621.3 811.2,621.2C808.5,621.1 806.0,619.3 802.4,619.7C798.8,620.1 793.7,623.4 789.3,623.4C784.9,623.4 780.3,620.6 776.2,619.7C772.1,618.9 768.2,619.0 764.6,618.3C761.0,617.6 756.4,625.1 754.8,615.4C753.2,605.7 751.5,569.2 754.8,560.0Z" fill="#b1b1b1"/><path d="M754.8,553.0C755.7,551.5 757.8,552.6 760.0,552.0C762.2,551.4 765.3,549.7 768.0,549.5C770.7,549.3 775.5,550.2 776.0,551.0C776.5,551.8 771.2,552.9 771.0,554.0C770.8,555.1 773.8,556.3 775.0,557.5C776.2,558.7 781.4,560.4 778.0,561.0C774.6,561.6 758.7,562.3 754.8,561.0C750.9,559.7 753.9,554.5 754.8,553.0Z" fill="#b1b1b1"/><path d="M778.5,561.5C779.0,560.9 782.1,559.6 784.0,559.3C785.9,559.0 789.7,559.3 790.0,559.8C790.3,560.3 787.5,561.8 786.0,562.3C784.5,562.8 782.2,563.1 781.0,563.0C779.8,562.9 778.0,562.1 778.5,561.5Z" fill="#b1b1b1"/><path d="M809.5,629.7C809.1,628.5 810.1,629.1 811.0,630.2C811.9,631.3 813.5,634.4 815.0,636.5C816.5,638.6 818.6,642.1 819.9,643.0C821.2,643.9 821.8,643.7 822.6,641.9C823.4,640.1 824.1,633.7 824.6,632.1C825.1,630.5 825.5,630.9 825.6,632.4C825.7,633.9 824.7,639.7 825.2,641.2C825.7,642.7 827.4,640.1 828.7,641.6C830.0,643.1 831.1,646.9 833.0,650.3C834.9,653.7 837.6,658.6 840.3,662.0C843.0,665.4 847.3,668.0 849.1,670.7C850.9,673.4 851.8,676.3 851.3,678.0C850.8,679.7 848.5,680.9 846.2,680.9C843.9,680.9 840.2,680.2 837.4,678.0C834.6,675.8 831.8,671.7 829.4,667.8C827.0,663.9 824.6,658.3 822.8,654.7C821.0,651.1 820.0,648.9 818.5,646.0C817.0,643.1 815.0,640.2 813.5,637.5C812.0,634.8 809.9,630.9 809.5,629.7Z" fill="#b1b1b1"/><path d="M909.0,632.6C909.0,631.2 911.2,630.4 912.5,629.6C913.8,628.9 915.1,627.8 916.8,628.1C918.4,628.4 920.3,629.8 922.4,631.5C924.5,633.2 926.8,636.0 929.2,638.2C931.6,640.5 934.0,643.1 937.0,645.0C940.0,646.9 943.9,648.5 947.1,649.4C950.3,650.3 953.8,650.9 956.1,650.6C958.4,650.3 959.6,647.8 961.1,647.6C962.6,647.4 964.0,648.2 965.0,649.4C966.0,650.6 965.4,653.7 967.3,655.0C969.2,656.3 972.6,656.7 976.3,657.3C980.0,657.9 985.6,658.1 989.7,658.4C993.8,658.7 996.6,659.2 1000.9,659.0C1005.2,658.8 1013.1,652.9 1015.6,657.3C1018.1,661.7 1020.7,680.9 1015.6,685.6C1010.5,690.3 990.6,686.8 985.2,685.6C979.8,684.4 984.5,681.1 983.0,678.6C981.5,676.1 978.9,673.5 976.3,670.7C973.7,667.9 969.5,664.7 967.3,661.8C965.0,658.9 964.1,654.6 962.8,653.5C961.5,652.4 960.9,654.2 959.4,655.4C957.9,656.6 955.8,659.1 953.8,660.7C951.8,662.3 949.5,664.2 947.1,665.1C944.7,666.0 941.7,666.5 939.3,666.3C936.9,666.1 934.8,665.5 932.5,664.0C930.2,662.5 927.5,659.5 925.8,657.3C924.1,655.1 923.9,652.9 922.4,650.6C920.9,648.4 918.5,645.9 916.8,643.8C915.1,641.7 913.6,640.1 912.3,638.2C911.0,636.3 909.0,634.0 909.0,632.6Z" fill="#b1b1b1"/><path d="M808.5,597.6C809.0,596.9 811.0,595.8 813.0,595.0C815.0,594.2 818.8,593.1 820.5,592.8C822.2,592.5 823.2,592.6 823.0,593.2C822.8,593.8 820.6,595.3 819.0,596.2C817.4,597.1 815.0,598.1 813.5,598.6C812.0,599.1 810.6,599.2 809.8,599.0C809.0,598.8 808.0,598.3 808.5,597.6Z" fill="#b9b9b9"/><path d="M928.6,653.6C929.1,653.0 930.3,653.5 930.8,654.6C931.3,655.8 931.8,659.3 931.6,660.5C931.4,661.7 930.1,662.4 929.4,662.0C928.7,661.6 927.7,659.4 927.6,658.0C927.5,656.6 928.1,654.2 928.6,653.6Z" fill="#b9b9b9"/><circle cx="758" cy="556" r="0.96" fill="#b9b9b9" opacity="0.55"/><circle cx="763" cy="558.5" r="0.80" fill="#b9b9b9" opacity="0.55"/><circle cx="767" cy="555" r="0.72" fill="#b9b9b9" opacity="0.55"/><circle cx="760" cy="565" r="1.12" fill="#b9b9b9" opacity="0.55"/><circle cx="765" cy="570" r="0.88" fill="#b9b9b9" opacity="0.55"/><circle cx="771" cy="574" r="0.80" fill="#b9b9b9" opacity="0.55"/><circle cx="757" cy="573" r="0.80" fill="#b9b9b9" opacity="0.55"/><circle cx="768" cy="563" r="0.64" fill="#b9b9b9" opacity="0.55"/><circle cx="762" cy="578" r="0.96" fill="#b9b9b9" opacity="0.55"/><circle cx="770" cy="582" r="1.20" fill="#b9b9b9" opacity="0.55"/><circle cx="758" cy="584" r="0.72" fill="#b9b9b9" opacity="0.55"/></g><g clip-path="url(#cp334)" font-family="Liberation Sans, sans-serif" fill="#c1c1c1" style="filter:blur(0.3px)"><text x="757" y="457.09999999999997" font-size="5.0" textLength="22.0" lengthAdjust="spacing">LATVIA</text><text x="757" y="468.9" font-size="5.0" textLength="15.0" lengthAdjust="spacing">UANIA</text><text x="766.1" y="483.5" font-size="5.0" textLength="28.3" lengthAdjust="spacing">BELARUS</text><text x="787.7" y="507.7" font-size="5.0" textLength="28.2" lengthAdjust="spacing">UKRAINE</text><text x="755.5" y="529.1999999999999" font-size="5.0" textLength="22.5" lengthAdjust="spacing">MANIA</text><text x="755.5" y="548.6999999999999" font-size="5.0" textLength="26.5" lengthAdjust="spacing">ULGARIA</text><text x="800.4" y="545.1" font-size="5.0" textLength="30.3" lengthAdjust="spacing" font-style="italic">Black Sea</text><text x="861" y="554.1" font-size="5.0" textLength="30.0" lengthAdjust="spacing">GEORGIA</text><text x="985.6" y="555.5" font-size="5.0" textLength="32.4" lengthAdjust="spacing">UZBEKIST</text><text x="954.5" y="569.9" font-size="5.0" textLength="49.7" lengthAdjust="spacing">TURKMENISTAN</text><text x="819.9" y="572.8" font-size="5.0" textLength="24.1" lengthAdjust="spacing">TURKEY</text><text x="840" y="598.0" font-size="5.0" textLength="18.1" lengthAdjust="spacing">SYRIA</text><text x="783.2" y="652.5" font-size="5.0" textLength="19.2" lengthAdjust="spacing">EGYPT</text><text x="856.4" y="657.8" font-size="5.0" textLength="46.2" lengthAdjust="spacing">SAUDI ARABIA</text><text x="755.5" y="605.9" font-size="5.0" textLength="31.5" lengthAdjust="spacing" font-style="italic">diterranean</text><text x="760" y="613.6" font-size="5.0" textLength="10.0" lengthAdjust="spacing" font-style="italic">Sea</text><text x="840" y="683.9" font-size="5.0" textLength="10.5" lengthAdjust="spacing" font-style="italic">Red</text><text x="946.3" y="612.9" font-size="5.0" textLength="15.3" lengthAdjust="spacing">IRAN</text><text x="1000" y="605.6" font-size="5.0" textLength="16.0" lengthAdjust="spacing">AFGH</text><text x="756" y="573.9" font-size="5.0" textLength="4.0" lengthAdjust="spacing">T.</text></g><circle cx="770.8" cy="529.9" r="4.9" fill="#e7c5c1"/><circle cx="768.0" cy="544.1" r="4.9" fill="#e7c5c1"/><circle cx="785.0" cy="578.6" r="4.9" fill="#e7c5c1"/><circle cx="843.4000000000001" cy="577.5" r="4.9" fill="#e7c5c1"/><circle cx="840.7" cy="582.7" r="4.9" fill="#e7c5c1"/><circle cx="881.7" cy="555.6" r="4.9" fill="#e7c5c1"/><circle cx="931.8000000000001" cy="629" r="4.9" fill="#e7c5c1"/><text x="776.0" y="525" font-size="9.1" textLength="20.5" lengthAdjust="spacingAndGlyphs" fill="#e6e6e6" font-family="Liberation Sans, sans-serif">1986</text><text x="775.6" y="547.6" font-size="9.1" textLength="20.5" lengthAdjust="spacingAndGlyphs" fill="#e6e6e6" font-family="Liberation Sans, sans-serif">1986</text><text x="789.9000000000001" y="574" font-size="9.1" textLength="20.9" lengthAdjust="spacingAndGlyphs" fill="#e6e6e6" font-family="Liberation Sans, sans-serif">1986</text><text x="816.0" y="578.2" font-size="9.1" textLength="20.5" lengthAdjust="spacingAndGlyphs" fill="#e6e6e6" font-family="Liberation Sans, sans-serif">1986</text><text x="849.0" y="573" font-size="9.1" textLength="20.1" lengthAdjust="spacingAndGlyphs" fill="#e6e6e6" font-family="Liberation Sans, sans-serif">1986</text><text x="886.9" y="551.4" font-size="9.1" textLength="20.2" lengthAdjust="spacingAndGlyphs" fill="#e6e6e6" font-family="Liberation Sans, sans-serif">1986</text><text x="905.7" y="626.9" font-size="9.1" textLength="20.5" lengthAdjust="spacingAndGlyphs" fill="#e6e6e6" font-family="Liberation Sans, sans-serif">1986</text><text x="937.3000000000001" y="624.1" font-size="9.1" textLength="20.2" lengthAdjust="spacingAndGlyphs" fill="#e6e6e6" font-family="Liberation Sans, sans-serif">1986</text><text x="929.0" y="675.6" font-size="8.2" textLength="77.2" lengthAdjust="spacingAndGlyphs" fill="#cbcbcb" font-weight="bold" font-family="Liberation Sans, sans-serif">Esri, HERE, Garmin, USGS</text><rect x="754.8" y="453.7" width="260.80000000000007" height="231.90000000000003" fill="none" stroke="#b4b4b4" stroke-width="1.5"/></g></svg>
<div class="t" style="left:438.0px;top:695.3px;font-size:14px;line-height:20px;letter-spacing:0.41px;color:#ababab;">Current Time 1/1/1985 to 1/1/1987</div>
<div class="t" style="left:771.5px;top:695.3px;font-size:14px;line-height:20px;letter-spacing:0.41px;color:#ababab;">Current Time 1/1/1992 to 1/1/1994</div>
<svg width="1122" height="892" style="left:0;top:0"><circle cx="37.6" cy="67.4" r="14.9" fill="#fff" stroke="#8c8c8c" stroke-width="1"/><circle cx="37.6" cy="67.4" r="13.2" fill="#d6e9f6"/><clipPath id="gc"><circle cx="37.6" cy="67.4" r="13.2"/></clipPath><g clip-path="url(#gc)" fill="#92c08d"><path d="M40,55 L44,56 L47,58.5 L49,62 L50.5,66 L50.8,70 L49.5,74 L47,77.5 L44,79.5 L42.5,77 L43.5,73.5 L41.5,71 L38.5,70.5 L36.5,68 L38.5,65.5 L42,66 L41.5,63 L44,61 L42,58.5 L39.5,58 Z"/><path d="M27.5,63 L29.5,66 L29,70 L31,73.5 L30,76.5 L27.5,74 L25.8,70 L26,66 Z"/><path d="M33,55.5 L36,56.5 L34.5,59 L32,58.5 Z"/></g><path d="M37.6,56 V67.9 H45.9" fill="none" stroke="#3f566b" stroke-width="1.4"/><g transform="translate(251,56.4)"><rect x="0.3" y="1.3" width="15.9" height="3.4" fill="#e39a80"/><rect x="2.6" y="0" width="1.4" height="2" fill="#d9826a"/><rect x="12.4" y="0" width="1.4" height="2" fill="#d9826a"/><rect x="5.6" y="2.3" width="5.2" height="0.9" fill="#c9745a"/><rect x="0.3" y="6.1" width="15.9" height="9.3" fill="#8c8c8c"/><rect x="1.20" y="7.00" width="2.15" height="1.9" fill="#fff"/><rect x="4.22" y="7.00" width="2.15" height="1.9" fill="#fff"/><rect x="7.24" y="7.00" width="2.15" height="1.9" fill="#fff"/><rect x="10.26" y="7.00" width="2.15" height="1.9" fill="#fff"/><rect x="13.28" y="7.00" width="2.15" height="1.9" fill="#fff"/><rect x="1.20" y="9.80" width="2.15" height="1.9" fill="#fff"/><rect x="4.22" y="9.80" width="2.15" height="1.9" fill="#fff"/><rect x="7.24" y="9.80" width="2.15" height="1.9" fill="#fff"/><rect x="10.26" y="9.80" width="2.15" height="1.9" fill="#fff"/><rect x="13.28" y="9.80" width="2.15" height="1.9" fill="#fff"/><rect x="1.20" y="12.60" width="2.15" height="1.9" fill="#fff"/><rect x="4.22" y="12.60" width="2.15" height="1.9" fill="#fff"/><rect x="7.24" y="12.60" width="2.15" height="1.9" fill="#fff"/><rect x="10.26" y="12.60" width="2.15" height="1.9" fill="#fff"/><rect x="13.28" y="12.60" width="2.15" height="1.9" fill="#fff"/></g><g transform="translate(251,102.6)"><rect x="0.3" y="1.3" width="15.9" height="3.4" fill="#e39a80"/><rect x="2.6" y="0" width="1.4" height="2" fill="#d9826a"/><rect x="12.4" y="0" width="1.4" height="2" fill="#d9826a"/><rect x="5.6" y="2.3" width="5.2" height="0.9" fill="#c9745a"/><rect x="0.3" y="6.1" width="15.9" height="9.3" fill="#8c8c8c"/><rect x="1.20" y="7.00" width="2.15" height="1.9" fill="#fff"/><rect x="4.22" y="7.00" width="2.15" height="1.9" fill="#fff"/><rect x="7.24" y="7.00" width="2.15" height="1.9" fill="#fff"/><rect x="10.26" y="7.00" width="2.15" height="1.9" fill="#fff"/><rect x="13.28" y="7.00" width="2.15" height="1.9" fill="#fff"/><rect x="1.20" y="9.80" width="2.15" height="1.9" fill="#fff"/><rect x="4.22" y="9.80" width="2.15" height="1.9" fill="#fff"/><rect x="7.24" y="9.80" width="2.15" height="1.9" fill="#fff"/><rect x="10.26" y="9.80" width="2.15" height="1.9" fill="#fff"/><rect x="13.28" y="9.80" width="2.15" height="1.9" fill="#fff"/><rect x="1.20" y="12.60" width="2.15" height="1.9" fill="#fff"/><rect x="4.22" y="12.60" width="2.15" height="1.9" fill="#fff"/><rect x="7.24" y="12.60" width="2.15" height="1.9" fill="#fff"/><rect x="10.26" y="12.60" width="2.15" height="1.9" fill="#fff"/><rect x="13.28" y="12.60" width="2.15" height="1.9" fill="#fff"/></g><g transform="translate(1066,79.4)"><rect x="0.3" y="1.3" width="15.9" height="3.4" fill="#e39a80"/><rect x="2.6" y="0" width="1.4" height="2" fill="#d9826a"/><rect x="12.4" y="0" width="1.4" height="2" fill="#d9826a"/><rect x="5.6" y="2.3" width="5.2" height="0.9" fill="#c9745a"/><rect x="0.3" y="6.1" width="15.9" height="9.3" fill="#8c8c8c"/><rect x="1.20" y="7.00" width="2.15" height="1.9" fill="#fff"/><rect x="4.22" y="7.00" width="2.15" height="1.9" fill="#fff"/><rect x="7.24" y="7.00" width="2.15" height="1.9" fill="#fff"/><rect x="10.26" y="7.00" width="2.15" height="1.9" fill="#fff"/><rect x="13.28" y="7.00" width="2.15" height="1.9" fill="#fff"/><rect x="1.20" y="9.80" width="2.15" height="1.9" fill="#fff"/><rect x="4.22" y="9.80" width="2.15" height="1.9" fill="#fff"/><rect x="7.24" y="9.80" width="2.15" height="1.9" fill="#fff"/><rect x="10.26" y="9.80" width="2.15" height="1.9" fill="#fff"/><rect x="13.28" y="9.80" width="2.15" height="1.9" fill="#fff"/><rect x="1.20" y="12.60" width="2.15" height="1.9" fill="#fff"/><rect x="4.22" y="12.60" width="2.15" height="1.9" fill="#fff"/><rect x="7.24" y="12.60" width="2.15" height="1.9" fill="#fff"/><rect x="10.26" y="12.60" width="2.15" height="1.9" fill="#fff"/><rect x="13.28" y="12.60" width="2.15" height="1.9" fill="#fff"/></g><g transform="translate(1066,102.4)"><rect x="0.3" y="1.3" width="15.9" height="3.4" fill="#e39a80"/><rect x="2.6" y="0" width="1.4" height="2" fill="#d9826a"/><rect x="12.4" y="0" width="1.4" height="2" fill="#d9826a"/><rect x="5.6" y="2.3" width="5.2" height="0.9" fill="#c9745a"/><rect x="0.3" y="6.1" width="15.9" height="9.3" fill="#8c8c8c"/><rect x="1.20" y="7.00" width="2.15" height="1.9" fill="#fff"/><rect x="4.22" y="7.00" width="2.15" height="1.9" fill="#fff"/><rect x="7.24" y="7.00" width="2.15" height="1.9" fill="#fff"/><rect x="10.26" y="7.00" width="2.15" height="1.9" fill="#fff"/><rect x="13.28" y="7.00" width="2.15" height="1.9" fill="#fff"/><rect x="1.20" y="9.80" width="2.15" height="1.9" fill="#fff"/><rect x="4.22" y="9.80" width="2.15" height="1.9" fill="#fff"/><rect x="7.24" y="9.80" width="2.15" height="1.9" fill="#fff"/><rect x="10.26" y="9.80" width="2.15" height="1.9" fill="#fff"/><rect x="13.28" y="9.80" width="2.15" height="1.9" fill="#fff"/><rect x="1.20" y="12.60" width="2.15" height="1.9" fill="#fff"/><rect x="4.22" y="12.60" width="2.15" height="1.9" fill="#fff"/><rect x="7.24" y="12.60" width="2.15" height="1.9" fill="#fff"/><rect x="10.26" y="12.60" width="2.15" height="1.9" fill="#fff"/><rect x="13.28" y="12.60" width="2.15" height="1.9" fill="#fff"/></g><rect x="274.1" y="57.1" width="12.9" height="2.8" fill="#676767"/><rect x="279" y="57.1" width="3.7" height="14.6" fill="#676767"/><rect x="279" y="77.2" width="3.7" height="19.6" fill="#676767"/><rect x="274.1" y="115.1" width="12.9" height="2.8" fill="#676767"/><rect x="279" y="103.2" width="3.7" height="14.6" fill="#676767"/><g transform="translate(295.7,56.9)"><path d="M8.3,6.6 V3.8 A2.45,2.45 0 0 1 13.2,3.8 V5.2" fill="none" stroke="#6a6a6a" stroke-width="2.1"/><path d="M8.3,6.6 V3.8 A2.45,2.45 0 0 1 13.2,3.8 V5.2" fill="none" stroke="#fff" stroke-width="0.6"/><rect x="0.5" y="6.6" width="9.2" height="6.2" rx="0.8" fill="#fff" stroke="#6a6a6a" stroke-width="1"/><path d="M4.1,8.1 L6.4,9.7 L4.1,11.3 Z" fill="#333"/></g><g transform="translate(295.7,79.9)"><path d="M8.3,6.6 V3.8 A2.45,2.45 0 0 1 13.2,3.8 V5.2" fill="none" stroke="#6a6a6a" stroke-width="2.1"/><path d="M8.3,6.6 V3.8 A2.45,2.45 0 0 1 13.2,3.8 V5.2" fill="none" stroke="#fff" stroke-width="0.6"/><rect x="0.5" y="6.6" width="9.2" height="6.2" rx="0.8" fill="#fff" stroke="#6a6a6a" stroke-width="1"/><path d="M4.1,8.1 L6.4,9.7 L4.1,11.3 Z" fill="#333"/></g><g transform="translate(295.7,102.9)"><path d="M8.3,6.6 V3.8 A2.45,2.45 0 0 1 13.2,3.8 V5.2" fill="none" stroke="#6a6a6a" stroke-width="2.1"/><path d="M8.3,6.6 V3.8 A2.45,2.45 0 0 1 13.2,3.8 V5.2" fill="none" stroke="#fff" stroke-width="0.6"/><rect x="0.5" y="6.6" width="9.2" height="6.2" rx="0.8" fill="#fff" stroke="#6a6a6a" stroke-width="1"/><path d="M4.1,8.1 L6.4,9.7 L4.1,11.3 Z" fill="#333"/></g><g transform="translate(1094.6,58.2)"><path d="M2.6,5.6 V3.6 A2.7,2.7 0 0 1 8,3.6 V5.6" fill="none" stroke="#6a6a6a" stroke-width="2.4"/><path d="M2.6,5.6 V3.6 A2.7,2.7 0 0 1 8,3.6 V5.6" fill="none" stroke="#fff" stroke-width="0.8"/><rect x="0.5" y="5.4" width="9.6" height="6" rx="0.8" fill="#fff" stroke="#6a6a6a" stroke-width="1"/><path d="M4.3,6.9 L6.5,8.4 L4.3,9.9 Z" fill="#333"/></g><path d="M319.3,58.2 L321.5,60.6 V67.3 L319.3,69.7 L317.1,67.3 V60.6 Z" fill="#dedede" stroke="#7a7a7a" stroke-width="0.9"/><rect x="323.1" y="61.3" width="8.1" height="2.2" fill="#1f6fb5"/><rect x="323.1" y="64.7" width="8.1" height="2.2" fill="#1f6fb5"/><rect x="317" y="107.8" width="9.7" height="2.2" fill="#1f6fb5"/><rect x="317" y="111" width="9.7" height="2.2" fill="#1f6fb5"/><path d="M326.6,103.4 Q331.8,110.2 326.6,117.2 L328.4,117.4 Q333.6,110.2 328.4,103.2 Z" fill="#e6e6e6" stroke="#666" stroke-width="1"/><circle cx="360" cy="64" r="6.3" fill="#ededed" stroke="#dcdcdc" stroke-width="1"/><circle cx="360" cy="87" r="6.3" fill="#fff" stroke="#7a7a7a" stroke-width="1"/><circle cx="360" cy="87" r="3.9" fill="#555"/><circle cx="360" cy="109.9" r="6.3" fill="#ededed" stroke="#dcdcdc" stroke-width="1"/><path d="M235.6,85.8 L239.0,89.3 L242.4,85.8" fill="none" stroke="#777" stroke-width="1.3"/><path d="M543.5,86.1 L546.75,89.3 L550,86.1" fill="none" stroke="#777" stroke-width="1.3"/><path d="M567,108.6 L570.5,112.4 L574,108.6" fill="none" stroke="#666" stroke-width="1.3"/><path d="M567.3,68.5 L570.65,71.7 L574,68.5" fill="none" stroke="#c4c4c4" stroke-width="1.1"/><path d="M692.1,84 L695.6500000000001,88 L699.2,84" fill="none" stroke="#222" stroke-width="1.5"/><path d="M1071.5,62.8 L1075.1,66.8 L1078.7,62.8" fill="none" stroke="#222" stroke-width="1.5"/><path d="M270.9,166 L274.5,169.8 L278.1,166" fill="none" stroke="#333" stroke-width="1.3"/><path d="M305.9,193.9 L309.5,197.9 L313.1,193.9" fill="none" stroke="#555" stroke-width="1.2"/><circle cx="568.6" cy="86.6" r="7" fill="#d7ecef" stroke="#8a8a8a" stroke-width="1"/><circle cx="568.6" cy="86.6" r="5.6" fill="none" stroke="#fff" stroke-width="0.8"/><path d="M568.6,82.2 V86.9 H572.2" fill="none" stroke="#3b6e78" stroke-width="1.2"/><rect x="600.6" y="54.7" width="12.9" height="12.6" rx="2" fill="#fff" stroke="#8a8a8a" stroke-width="1"/><path d="M603,61.4 L606.1,64.7 L611.7,57.6" fill="none" stroke="#333" stroke-width="1.6"/><rect x="732.8" y="60.1" width="1.1" height="8.8" fill="#747474"/><path d="M735.1,64.5 L742,60.4 V68.6 Z" fill="#747474"/><path d="M754,57.4 L764.9,64.6 L754,71.8 Z" fill="#6f6f6f"/><path d="M776,60.4 L783.2,64.5 L776,68.6 Z" fill="#747474"/><rect x="784.1" y="60.1" width="1.1" height="8.8" fill="#747474"/><path d="M805,65.4 H818.5" fill="none" stroke="#666" stroke-width="2.7"/><path d="M811.8,59.6 L820,65.4 L811.8,71.3" fill="none" stroke="#666" stroke-width="2.7" stroke-linejoin="miter"/><rect x="722.1" y="84.8" width="67" height="3.2" fill="#6e6e6e"/><rect x="791" y="84.8" width="6.9" height="3.2" fill="#dcdcdc"/><rect x="788" y="81.2" width="3" height="10.5" fill="#6e6e6e"/><path d="M811.3,89.7 H808.6 Q807.4,89.7 807.4,88.5 V84.9 Q807.4,83.7 808.6,83.7 H817.4 Q818.6,83.7 818.6,84.9 V88.5 Q818.6,89.7 817.4,89.7 H815" fill="none" stroke="#666" stroke-width="1"/><path d="M812.2,89.7 L815.2,87.6 V91.8 Z" fill="#666"/><path d="M807,105.4 H816 V111.8 H812.5" fill="none" stroke="#666" stroke-width="1"/><path d="M809.8,111.8 L813,109.6 V114 Z" fill="#666"/><rect x="818" y="102.5" width="1.1" height="13.2" fill="#666"/><circle cx="1100.6" cy="96.9" r="7.3" fill="#f3f3f3" stroke="#d6d6d6" stroke-width="1"/><path d="M1100.6,92 V97 H1103.8" fill="none" stroke="#d0d0d0" stroke-width="1"/><path d="M1093.4,103.8 H1098.2 M1093.4,103.8 L1095.2,102.2 M1093.4,103.8 L1095.2,105.4 M1103,103.8 H1107.8 M1107.8,103.8 L1106,102.2 M1107.8,103.8 L1106,105.4" fill="none" stroke="#d0d0d0" stroke-width="1"/><path d="M290.9,168.6 V162.5 H294.6 V168.6" fill="none" stroke="#333" stroke-width="1"/><rect x="293.6" y="162.5" width="1.5" height="6.1" fill="#333"/><rect x="289.3" y="168.3" width="6.7" height="1.1" fill="#333"/><rect x="292.1" y="169" width="1.1" height="2.9" fill="#333"/><path d="M306.9,163.2 L316.2,171.8 M316.2,163.2 L306.9,171.8" stroke="#333" stroke-width="1.3" fill="none"/><path d="M9.2,188.6 H22 L17,195.2 V203.6 H13.9 V195.2 Z" fill="#8e8e8e" stroke="#666" stroke-width="0.9" stroke-linejoin="round"/><rect x="14.7" y="195.6" width="1.5" height="7.4" fill="#e8e8e8"/><circle cx="289.7" cy="194.3" r="3.5" fill="none" stroke="#444" stroke-width="1.4"/><path d="M287.3,196.9 L282.6,201.3" stroke="#444" stroke-width="1.7" stroke-linecap="round"/><path d="M29.6,225 V237.3 H39 M29.6,229.6 H39" fill="none" stroke="#555" stroke-width="1"/><path d="M26.5,218.4 H32.8 L34,222 H34 V225 H25 V222 Z" fill="#e6d24b"/><path d="M39.8,226.8 H45.6 L46.9,229.4 V232.4 H38.4 V229.4 Z" fill="#e6d24b"/><path d="M39.8,234.6 H45.6 L46.9,237 V239.8 H38.4 V237 Z" fill="#e6d24b"/><path d="M25,222 H34 M38.4,229.4 H46.9 M38.4,237 H46.9" stroke="#f3e789" stroke-width="0.8"/><path d="M57.4,223.4 V234.4 A10.1,4 0 0 0 77.6,234.4 V223.4" fill="#ededed" stroke="#9a9a9a" stroke-width="1"/><path d="M71.5,227 V238 Q76.5,237 77.6,234.4 V224 Q76.5,226 71.5,227 Z" fill="#d6d6d6"/><ellipse cx="67.5" cy="223.4" rx="10.1" ry="4" fill="#f6f6f6" stroke="#9a9a9a" stroke-width="1"/><rect x="90.4" y="219.8" width="19" height="18.4" rx="1.6" fill="#fff" stroke="#666" stroke-width="1.1"/><path d="M91,220.4 H96.5 Q98,226 101,230 Q102.5,234 102.6,237.6 H91 Z" fill="#aadff5"/><path d="M96.5,220 Q98,226 101,230 Q102.5,234 102.6,238 M101,230 Q103,225 109,223.6" fill="none" stroke="#555" stroke-width="1"/><path d="M123.6,236.6 L138.6,221.6 L140.9,223.9 L125.9,238.9 Z" fill="#d9c93c" stroke="#b3a22a" stroke-width="0.6"/><path d="M138.6,221.6 L139.9,220.3 L142.2,222.6 L140.9,223.9 Z" fill="#9b7a58"/><path d="M123.6,236.6 L125.9,238.9 L122.6,239.6 Z" fill="#7a6a3a"/><path d="M153.6,218.6 H169.4 V226.4 H161.5 V234.2 H153.6 Z M161.5,218.6 V226.4 M153.6,226.4 H161.5" fill="#fff" stroke="#8a8a8a" stroke-width="1"/><path d="M169.4,228.6 V240.4 M163.5,234.5 H175.3" stroke="#2b6cb0" stroke-width="1.9" fill="none"/><path d="M199.5,218.6 L206.6,225.6 L195.6,238.2 L186.9,236.2 L186.5,228.4 Z" fill="#f2dc80" stroke="#8a8a8a" stroke-width="1" stroke-linejoin="round"/><circle cx="191.4" cy="233.4" r="1.9" fill="#fff" stroke="#8a8a8a" stroke-width="0.9"/><path d="M190.6,235 Q190.5,239.3 187.3,238.6" fill="none" stroke="#8a8a8a" stroke-width="0.9"/><path d="M195,227.5 L200.5,222.5 M197,229.5 L202.5,224.5" stroke="#e3c96a" stroke-width="0.7"/><path d="M226.5,224 L216.6,239.6 H239.8 Z" fill="#cfe8f8"/><path d="M226.5,224 L216.6,239.6 H223.5 L226,231 Z" fill="#4f9fdb"/><path d="M226,231 L223.5,239.6 H231 L229,233 Z" fill="#9ccdf0"/><g transform="translate(228.2,227.6) rotate(42)"><rect x="-3.2" y="-2.4" width="6.4" height="4.8" fill="#555"/><rect x="-11" y="-2" width="6.6" height="4" fill="#fff" stroke="#444" stroke-width="0.9"/><rect x="4.4" y="-2" width="6.6" height="4" fill="#fff" stroke="#444" stroke-width="0.9"/></g><path d="M10.6,293.8 L14.4,297.7 L10.6,301.6 Z" fill="none" stroke="#7a7a7a" stroke-width="0.9"/><rect x="19.6" y="290.4" width="14.6" height="14.6" fill="#fff" stroke="#555" stroke-width="1"/><rect x="21.2" y="292" width="11.4" height="11.4" fill="#8fbc8b"/><path d="M23.5,303.4 L26,298.5 L28,297 L29.5,293.5 L32.6,292 V296 L30.5,298.5 L29.5,301 L27,303.4 Z" fill="#cfe6ef"/><path d="M336.5,156.5 H347.5 L351.4,160.4 V171.4 H336.5 Z" fill="#fff" stroke="#444" stroke-width="1"/><path d="M347.5,156.5 V160.4 H351.4" fill="none" stroke="#444" stroke-width="0.9"/><rect x="338.2" y="158.2" width="11.4" height="7.4" fill="#4aa6e6"/><path d="M341,163 L344,160.5 L346,162 L348,160" stroke="#bfe2f8" stroke-width="1.2" fill="none"/><path d="M338.4,167.6 H343.5 M338.4,169.5 H341.5" stroke="#444" stroke-width="0.9"/><path d="M347.5,169.8 L348.8,168 L350,169.8 Z" fill="#4a86c5"/><path d="M403,160.2 L412.2,169.2 M412.2,160.2 L403,169.2" stroke="#555" stroke-width="1.2" fill="none"/><circle cx="365" cy="188.9" r="8.5" fill="#fff" stroke="#555" stroke-width="1.2"/><path d="M360.6,188.9 H370 M364.4,185 L360.4,188.9 L364.4,192.8" fill="none" stroke="#555" stroke-width="1.4"/><rect x="1097.1" y="182.2" width="14" height="13.7" rx="2" fill="#cf6842"/><path d="M1100.4,185.4 L1107.8,192.7 M1107.8,185.4 L1100.4,192.7" stroke="#fbeee8" stroke-width="2" fill="none"/><path d="M1119.3,161.8 L1121.2,164.2 L1123,161.8 Z" fill="#444"/><path d="M1119.6,231.2 L1121.6,228.6 L1123.6,231.2 Z" fill="#666"/><rect x="777.2" y="257.4" width="35.4" height="7.6" fill="#c9d8e3"/><rect x="777.2" y="259" width="35.4" height="4.2" fill="#9fb7c8"/><path d="M773.2,251.6 L777.2,255.9 V266 L773.2,270.3 L769.1,266 V255.9 Z" fill="#e2e2e2" stroke="#b4b4b4" stroke-width="0.9"/><path d="M813.3,246.8 L819.7,252.1 V269.2 L813.8,274.6 L808.4,270.3 L812.7,266.6 V254.8 L808.4,251 Z" fill="#e5e5e5" stroke="#b9b9b9" stroke-width="0.9" stroke-linejoin="round"/></svg>
<svg width="1122" height="892" style="left:0;top:0;pointer-events:none"><path d="M559.6,4.6C560.8,5.2 564.2,6.7 566.5,8.0C568.8,9.3 571.4,10.8 573.3,12.7C575.2,14.6 576.8,17.0 577.7,19.6C578.6,22.2 578.8,25.1 578.7,28.4C578.6,31.7 578.0,35.8 577.3,39.2C576.6,42.6 575.8,45.7 574.3,49.0C572.8,52.3 570.7,56.0 568.4,58.8C566.1,61.6 563.5,63.8 560.6,65.7C557.7,67.6 554.4,69.1 550.8,70.1C547.2,71.1 542.9,71.6 539.0,71.6C535.1,71.6 531.0,71.1 527.3,70.1C523.5,69.1 519.6,67.6 516.5,65.7C513.4,63.8 510.7,61.6 508.6,58.8C506.6,56.0 505.1,52.3 504.2,49.0C503.3,45.7 503.3,42.5 503.2,39.2C503.1,35.9 503.1,32.3 503.5,29.4C503.9,26.5 504.3,24.1 505.7,21.6C507.1,19.2 509.0,16.8 511.6,14.7C514.2,12.6 517.6,10.8 521.4,9.3C525.1,7.8 529.9,6.6 534.1,5.9C538.4,5.2 543.1,4.9 546.9,4.9C550.7,4.9 553.9,5.2 556.7,5.9C559.5,6.6 562.4,8.5 563.5,9.0" fill="none" stroke="#25dc12" stroke-width="5.9" stroke-linecap="round" stroke-linejoin="round"/><path d="M448.5,220.5C449.0,220.1 447.8,219.5 451.6,218.2C455.4,216.9 464.4,214.2 471.2,212.8C478.0,211.4 486.1,211.2 492.6,210.0C499.1,208.8 500.9,206.5 510.4,205.7C519.9,204.9 538.9,205.5 549.6,205.0C560.3,204.5 560.3,203.3 574.6,202.8C588.9,202.3 610.6,202.2 635.2,202.1C659.8,202.0 689.7,202.2 722.0,202.1C754.3,202.0 804.0,201.4 829.0,201.4C854.0,201.4 861.0,201.4 871.7,202.1C882.4,202.8 884.8,204.4 893.1,205.7C901.4,207.0 910.9,208.3 921.6,210.0C932.3,211.7 946.0,213.9 957.3,215.7C968.6,217.5 978.1,218.9 989.4,220.7C1000.7,222.5 1014.3,224.6 1025.0,226.4C1035.7,228.2 1044.7,229.5 1053.6,231.7C1062.5,233.9 1070.8,236.8 1078.5,239.6C1086.2,242.4 1094.6,245.2 1099.9,248.5C1105.2,251.8 1108.7,255.6 1110.6,259.2C1112.5,262.8 1111.9,266.0 1111.3,269.9C1110.7,273.8 1110.1,278.1 1107.0,282.3C1103.9,286.5 1098.1,291.1 1092.8,294.8C1087.5,298.5 1082.1,302.1 1075.0,304.4C1067.9,306.7 1057.7,307.3 1050.0,308.4C1042.3,309.5 1035.1,309.7 1028.6,310.9C1022.1,312.1 1016.7,314.3 1010.8,315.5C1004.9,316.7 1000.1,316.6 993.0,318.0C985.9,319.4 976.3,321.6 968.0,324.0C959.7,326.4 950.1,330.2 943.0,332.3C935.9,334.4 933.5,336.0 925.2,336.9C916.9,337.8 909.1,337.5 893.1,337.6C877.1,337.7 845.6,337.8 829.0,337.6C812.4,337.4 805.2,337.2 793.3,336.5C781.4,335.8 769.2,335.0 757.7,333.3C746.2,331.6 734.0,327.9 724.3,326.2C714.6,324.5 711.3,323.7 699.4,323.3C687.5,322.9 669.6,323.9 653.0,324.0C636.4,324.1 619.2,324.1 599.6,324.0C580.0,323.9 555.0,323.7 535.4,323.3C515.8,322.9 497.3,322.7 481.9,321.6C466.4,320.5 454.6,319.0 442.7,316.9C430.8,314.8 420.1,311.9 410.6,309.1C401.1,306.3 392.2,303.5 385.7,300.2C379.2,296.9 374.7,293.7 371.4,289.5C368.1,285.3 366.5,280.2 366.0,275.2C365.5,270.1 366.4,264.6 368.5,259.2C370.6,253.8 373.9,247.8 378.5,243.1C383.1,238.3 389.2,234.0 396.3,230.7C403.4,227.4 412.9,225.4 421.3,223.5C429.8,221.6 442.7,220.2 447.0,219.5" fill="none" stroke="#25dc12" stroke-width="5.8" stroke-linecap="round" stroke-linejoin="round"/><circle cx="449.3" cy="220.6" r="3.7" fill="#25dc12"/></svg>
</body></html>
